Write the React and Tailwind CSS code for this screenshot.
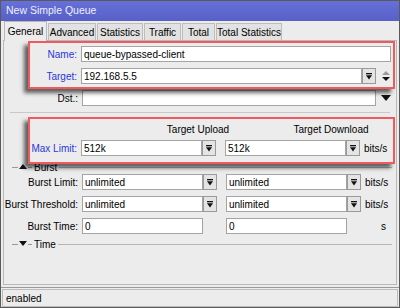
import React from "react";

const font = { fontFamily: '"Liberation Sans", Arial, sans-serif' };

function DropBtn() {
  return (
    <div className="w-[14px] h-[16px] border border-[#9a9a9a] bg-[#e4e4e4] flex items-center justify-center shrink-0">
      <svg width="6" height="7" viewBox="0 0 6 7">
        <rect x="0" y="0" width="6" height="1.3" fill="#111" />
        <polygon points="0,2.3 6,2.3 3,6.5" fill="#111" />
      </svg>
    </div>
  );
}

function Input({ value, className = "" }) {
  return (
    <div className={`h-[16px] bg-white border border-[#a4a4a4] flex items-center pl-[2px] text-[10px] text-black shrink-0 ${className}`}>
      {value}
    </div>
  );
}

function Tab({ label, active, w }) {
  if (active) {
    return (
      <div className={`h-[20px] -mb-px bg-[#ececec] border border-[#b9b9b9] border-b-0 flex items-center justify-center text-[10px] text-black z-10 ${w}`}>
        {label}
      </div>
    );
  }
  return (
    <div className={`h-[17px] bg-[#e2e2e2] border border-[#bdbdbd] border-b-0 flex items-center justify-center text-[10px] text-black ${w}`}>
      {label}
    </div>
  );
}

function Section({ label, open }) {
  return (
    <div className="flex items-center h-[10px] pl-[8px] pr-[4px]">
      <div className="w-[6px] h-px bg-[#999]" />
      <svg width="8" height="6" viewBox="0 0 8 6" className="mx-[1px]">
        {open ? (
          <polygon points="0,0 8,0 4,5" fill="#111" />
        ) : (
          <polygon points="0,5 8,5 4,0" fill="#111" />
        )}
      </svg>
      <div className="w-[4px] h-px bg-[#999]" />
      <span className="px-[2px] text-[10px] text-black">{label}</span>
      <div className="flex-1 h-px bg-[#b5b5b5]" />
    </div>
  );
}

function PairRow({ label, a, b, unit, btn = true }) {
  return (
    <div className="flex items-center h-[16px]">
      <div className="w-[78px] text-right pr-[4px] text-[10px] text-black whitespace-nowrap">{label}</div>
      <Input value={a} className="w-[121px]" />
      {btn ? <DropBtn /> : <div className="w-[14px]" />}
      <div className="w-[9px]" />
      <Input value={b} className="w-[121px]" />
      {btn ? <DropBtn /> : <div className="w-[14px]" />}
      <div className={`ml-[4px] text-[10px] text-black ${unit === "s" ? "pl-[16px]" : ""}`}>{unit}</div>
    </div>
  );
}

export default function App() {
  return (
    <div style={font} className="w-[400px] h-[308px] bg-[#ececec] border border-[#5a5a5a] flex flex-col overflow-hidden">
      <div className="h-[20px] bg-gradient-to-b from-[#6670d8] to-[#5860c6] flex items-center pl-[5px] text-[10.5px] text-[#eef0ff] shrink-0">
        New Simple Queue
      </div>
      <div className="flex items-end h-[19px] pl-[3px] gap-[1px] shrink-0">
        <Tab label="General" active w="w-[43px]" />
        <Tab label="Advanced" w="w-[48px]" />
        <Tab label="Statistics" w="w-[46px]" />
        <Tab label="Traffic" w="w-[37px]" />
        <Tab label="Total" w="w-[33px]" />
        <Tab label="Total Statistics" w="w-[66px]" />
      </div>
      <div className="mx-[2px] h-[245px] border border-[#b9b9b9] bg-[#ececec] flex flex-col shrink-0">
        <div className="ml-[24px] mr-[1px] h-[48px] border-2 border-[#f05a5c] shadow-[-4px_4px_4px_rgba(0,0,0,0.6)] flex flex-col pt-[3px] gap-[6px] bg-[#ececec] z-10">
          <div className="flex items-center h-[16px]">
            <div className="w-[51px] text-right pr-[4px] text-[10px] text-[#2a36e0]">Name:</div>
            <Input value="queue-bypassed-client" className="w-[310px]" />
          </div>
          <div className="flex items-center h-[16px]">
            <div className="w-[51px] text-right pr-[4px] text-[10px] text-[#2a36e0]">Target:</div>
            <Input value="192.168.5.5" className="w-[281px]" />
            <DropBtn />
            <svg width="10" height="12" viewBox="0 0 10 12" className="ml-[5px]">
              <polygon points="1,5 9,5 5,1" fill="#9a9a9a" />
              <polygon points="1,7 9,7 5,11" fill="#111" />
            </svg>
          </div>
        </div>
        <div className="flex items-center h-[16px] mt-[1px]">
          <div className="w-[78px] text-right pr-[4px] text-[10px] text-black">Dst.:</div>
          <Input value="" className="w-[294px]" />
          <svg width="10" height="7" viewBox="0 0 10 7" className="ml-[5px]">
            <polygon points="0,0 10,0 5,6" fill="#111" />
          </svg>
        </div>
        <div className="mx-[6px] mt-[6px] h-px bg-[#c8c8c8]" />
        <div className="ml-[24px] mr-[1px] mt-[4px] h-[47px] border-2 border-[#f05a5c] shadow-[-4px_4px_4px_rgba(0,0,0,0.6)] flex flex-col bg-[#ececec] z-10">
          <div className="flex h-[20px] items-center text-[10px] text-black">
            <div className="w-[132px]" />
            <div className="w-[72px] text-center whitespace-nowrap">Target Upload</div>
            <div className="w-[58px]" />
            <div className="w-[78px] text-center whitespace-nowrap">Target Download</div>
          </div>
          <div className="flex items-center h-[16px] mt-[1px]">
            <div className="w-[51px] text-right pr-[4px] text-[10px] text-[#2a36e0] whitespace-nowrap">Max Limit:</div>
            <Input value="512k" className="w-[121px]" />
            <DropBtn />
            <div className="w-[9px]" />
            <Input value="512k" className="w-[121px]" />
            <DropBtn />
            <div className="ml-[4px] text-[10px] text-black">bits/s</div>
          </div>
        </div>
        <div className="-mt-[2px]">
          <Section label="Burst" />
        </div>
        <div className="flex flex-col gap-[6px] mt-[2px]">
          <PairRow label="Burst Limit:" a="unlimited" b="unlimited" unit="bits/s" />
          <PairRow label="Burst Threshold:" a="unlimited" b="unlimited" unit="bits/s" />
          <PairRow label="Burst Time:" a="0" b="0" unit="s" btn={false} />
        </div>
        <div className="mt-[5px]">
          <Section label="Time" open />
        </div>
      </div>
      <div className="mt-[2px] h-px bg-[#9a9a9a]" />
      <div className="mx-[1px] mt-[1px] h-[18px] border border-[#bcbcbc] flex items-center pl-[3px] text-[10px] text-black">
        enabled
      </div>
    </div>
  );
}
